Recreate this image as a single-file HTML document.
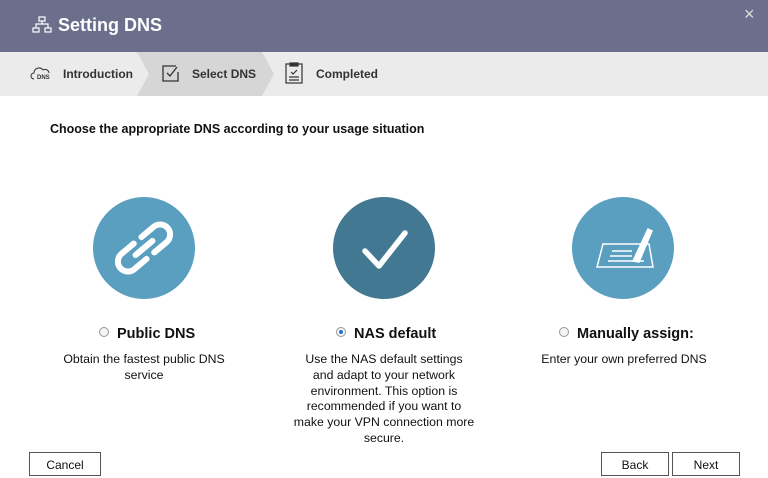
<!DOCTYPE html><html><head><style>
body{margin:0;width:768px;height:478px;overflow:hidden;background:#fff;font-family:"Liberation Sans",sans-serif;color:#111;position:relative}
.hd{position:absolute;left:0;top:0;width:768px;height:52px;background:#6b6f8b;color:#fff}
.hd .t{position:absolute;left:58px;top:15px;font-size:18px;font-weight:bold}
.bar{position:absolute;left:0;top:52px;width:768px;height:44px;background:#ebebeb}
.st{position:absolute;top:67px;font-size:12px;font-weight:bold;color:#333}
.ab{position:absolute;font-size:12.5px;font-weight:bold;text-align:center}
.c{position:absolute;top:197px;width:102px;height:102px;border-radius:50%}
.r{position:absolute;top:326px;font-size:14.5px;font-weight:bold}
.rd{display:inline-block;width:8px;height:8px;border:1px solid #999;border-radius:50%;margin-right:8px;vertical-align:1px;position:relative;background:#f4f4f4}
.d{position:absolute;top:352px;font-size:12.3px;text-align:center;line-height:15.8px;color:#111}
.b{position:absolute;top:452px;height:24px;border:1px solid #555;font-size:12px;text-align:center;line-height:24px;box-sizing:border-box;background:#fff}
</style></head><body>
<div class="hd">
<svg style="position:absolute;left:32px;top:16px" width="20" height="18" viewBox="0 0 20 18" fill="none" stroke="#fff" stroke-width="1.2"><rect x="7" y="1" width="6" height="4"/><rect x="1" y="12" width="6" height="4"/><rect x="13" y="12" width="6" height="4"/><path d="M10 5v3M4 12V8h12v4"/></svg>
<div class="t">Setting DNS</div>
<div style="position:absolute;left:744px;top:4px;font-size:18px;color:#ddd">×</div>
</div>
<div class="bar"></div>
<svg style="position:absolute;left:0;top:52px" width="768" height="44"><polygon points="137,0 262,0 274,22 262,44 137,44 149,22" fill="#d6d6d6"/></svg>
<svg style="position:absolute;left:30px;top:65px" width="24" height="16" viewBox="0 0 24 16" fill="none" stroke="#333" stroke-width="1"><path d="M4 14a3 3 0 0 1 0-6a5 5 0 0 1 9-3a4 4 0 0 1 6 3"/><text x="7" y="14" font-size="6" fill="#333" stroke="none" font-weight="bold" font-family="Liberation Sans">DNS</text></svg>
<div class="st" style="left:63px">Introduction</div>
<svg style="position:absolute;left:162px;top:64px" width="18" height="18" viewBox="0 0 18 18" fill="none" stroke="#333" stroke-width="1.3"><path d="M14 2H1v15h15V8"/><path d="M5 9l3 3 7-9"/></svg>
<div class="st" style="left:192px">Select DNS</div>
<svg style="position:absolute;left:285px;top:62px" width="18" height="22" viewBox="0 0 18 22" fill="none" stroke="#333" stroke-width="1.2"><rect x="1" y="2" width="16" height="19"/><rect x="5" y="1" width="8" height="3" fill="#333"/><path d="M6 10l2 2 4-4M4 15h10M4 18h10"/></svg>
<div class="st" style="left:316px">Completed</div>
<div class="ab" style="left:50px;top:122px">Choose the appropriate DNS according to your usage situation</div>
<div class="c" style="left:93px;background:#5a9fc0"><svg width="102" height="102" viewBox="0 0 102 102" fill="none" stroke="#fff" stroke-width="6" stroke-linecap="round"><g transform="rotate(-40 51 51)"><path d="M46 41h-16a10 10 0 0 0 0 20h16"/><path d="M56 61h16a10 10 0 0 0 0-20h-16"/><path d="M40 51h22"/></g></svg></div>
<div class="c" style="left:333px;background:#427891"><svg width="102" height="102" viewBox="0 0 102 102" fill="none" stroke="#fff" stroke-width="5.5" stroke-linecap="round" stroke-linejoin="round"><path d="M32 54l14 15 26-33"/></svg></div>
<div class="c" style="left:572px;background:#5a9fc0"><svg width="102" height="102" viewBox="0 0 102 102" fill="none" stroke="#fff" stroke-width="1.5"><path d="M31 47h46l4 23H25z"/><path d="M40 54h20M38 59h22M36 64h36"/><path d="M61 64l15-32 4 2-13 31z" fill="#fff"/></svg></div>
<div class="r" style="left:99px"><span class="rd"></span>Public DNS</div>
<div class="r" style="left:336px"><span class="rd"><span style="position:absolute;left:2px;top:2px;width:4px;height:4px;border-radius:50%;background:#2a6fd6"></span></span>NAS default</div>
<div class="r" style="left:559px"><span class="rd"></span>Manually assign:</div>
<div class="d" style="left:44px;width:200px">Obtain the fastest public DNS<br>service</div>
<div class="d" style="left:284px;width:200px">Use the NAS default settings<br>and adapt to your network<br>environment. This option is<br>recommended if you want to<br>make your VPN connection more<br>secure.</div>
<div class="d" style="left:524px;width:200px">Enter your own preferred DNS</div>
<div class="b" style="left:29px;width:72px">Cancel</div>
<div class="b" style="left:601px;width:68px">Back</div>
<div class="b" style="left:672px;width:68px">Next</div>
</body></html>
